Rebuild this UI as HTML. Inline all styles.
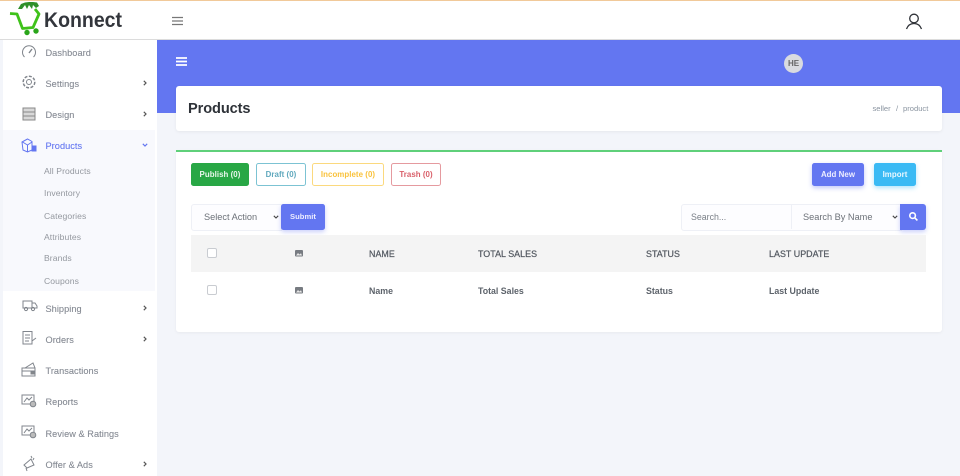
<!DOCTYPE html>
<html><head><meta charset="utf-8"><title>Products</title>
<style>
html,body{margin:0;padding:0}
body{width:960px;height:476px;overflow:hidden;position:relative;background:#f3f5fa;font-family:"Liberation Sans",sans-serif;color:#6c757d}
#w{position:absolute;left:0;top:0;width:960px;height:476px;filter:blur(.3px)}
.a{position:absolute;white-space:nowrap}
.side{font-size:9.2px;color:#858a93;left:45.5px;line-height:12px;letter-spacing:.05px;-webkit-text-stroke:.1px #858a93}
.sub{font-size:8.6px;color:#94989f;left:44px;line-height:12px;letter-spacing:.08px}
.chev{left:143px;width:4px;height:6px}
svg{position:absolute;overflow:visible}
.ic{left:21px;width:16px;height:16px;fill:none;stroke:#80858c;stroke-width:1}
.btn{box-sizing:border-box;height:23px;line-height:21px;text-align:center;font-size:7.9px;font-weight:bold;border:1px solid;border-radius:2.5px;letter-spacing:.05px}
.th{font-size:8.9px;color:#50565e;line-height:12px;letter-spacing:.05px;-webkit-text-stroke:.2px #50565e}
.td{font-size:8.8px;color:#5d636b;font-weight:bold;line-height:12px}
.cb{left:207px;width:10px;height:10px;box-sizing:border-box;border:1px solid #c9ccd1;border-radius:2px;background:#fff}
</style></head><body><div id="w">
<div class="a" style="left:0;top:0;width:960px;height:1px;background:#f1c999"></div>
<div class="a" style="left:0;top:1px;width:960px;height:38px;background:#fff"></div>
<div class="a" style="left:0;top:39px;width:960px;height:1px;background:#dcdcdc"></div>

<svg style="left:0;top:0;width:130px;height:40px">
<path d="M10 13.5 L17 14 L22.5 28.5 L33 27.5 L39 14 L35 9" fill="none" stroke="#3fc21a" stroke-width="2.8" stroke-linejoin="round"/>
<path d="M18 9 L21 4 L25 2.5 L29 2 L33 2 L37 2.5 L39 6 L36 8 L33 5 L32 9 L29 5 L27 9 L25 5 L22 9Z" fill="#2f8f2a"/>
<circle cx="27" cy="32.5" r="2.7" fill="#2aa51a"/><circle cx="36" cy="31" r="2.7" fill="#2aa51a"/>
<text x="44" y="27" font-family="Liberation Sans" font-size="21" font-weight="bold" fill="#33363c" textLength="78" lengthAdjust="spacingAndGlyphs">Konnect</text>
</svg>
<svg style="left:172px;top:17px;width:11px;height:8px"><path d="M0 .5H11M0 4H11M0 7.5H11" stroke="#777" stroke-width="1.2"/></svg>
<svg style="left:905px;top:12px;width:18px;height:18px" fill="none" stroke="#2f3238" stroke-width="1.3"><circle cx="9" cy="6.5" r="4.3"/><path d="M1.5 17C3 13 6 11.5 9 11.5S15 13 16.5 17"/></svg>

<!-- sidebar -->
<div class="a" style="left:3px;top:40px;width:154px;height:436px;background:#fff"></div>
<div class="a" style="left:3px;top:130px;width:152px;height:161px;background:#f8f9fd"></div>

<svg class="ic" style="top:44px" viewBox="0 0 16 16"><path d="M3.5 13A6.5 6.5 0 1 1 12.5 13"/><path d="M8 9L11 5" stroke-width="1.4"/></svg>
<div class="a side" style="top:46.5px">Dashboard</div>
<svg class="ic" style="top:74px" viewBox="0 0 16 16"><circle cx="8" cy="8" r="2.5"/><circle cx="8" cy="8" r="5.8" stroke-dasharray="3 1.5" stroke-width="1.5"/></svg>
<div class="a side" style="top:77.5px">Settings</div>
<svg class="a chev" style="top:80px" viewBox="0 0 4 6"><path d="M.8 .8L3 3L.8 5.2" fill="none" stroke="#555" stroke-width="1.2"/></svg>
<svg class="ic" style="top:106px" viewBox="0 0 16 16"><path d="M2 2H14V14H2ZM2 6H14M2 10H14" fill="#d8d8d8" stroke="#888"/></svg>
<div class="a side" style="top:109px">Design</div>
<svg class="a chev" style="top:111px" viewBox="0 0 4 6"><path d="M.8 .8L3 3L.8 5.2" fill="none" stroke="#555" stroke-width="1.2"/></svg>
<svg class="ic" style="top:137px;stroke:#6376f1" viewBox="0 0 16 16"><path d="M1 5L6.5 2L11 4.5V13L6.5 15L2 13ZM1.5 5L6.5 8V15M6.5 8L11 5"/><path d="M11 9H15V14H11Z" fill="#6376f1"/></svg>
<div class="a side" style="top:140px;color:#6376f1;-webkit-text-stroke:.1px #6376f1">Products</div>
<svg class="a" style="left:142px;top:143px;width:6px;height:4px" viewBox="0 0 6 4"><path d="M.8 .8L3 3L5.2 .8" fill="none" stroke="#6376f1" stroke-width="1.2"/></svg>
<div class="a sub" style="top:165px">All Products</div>
<div class="a sub" style="top:187px">Inventory</div>
<div class="a sub" style="top:210px">Categories</div>
<div class="a sub" style="top:231px">Attributes</div>
<div class="a sub" style="top:252px">Brands</div>
<div class="a sub" style="top:275px">Coupons</div>
<svg class="ic" style="top:298px" viewBox="0 0 16 16"><path d="M2 3H11V10H2ZM11 5H14L16 8V10H11"/><circle cx="5" cy="11" r="1.6"/><circle cx="12" cy="11" r="1.6"/></svg>
<div class="a side" style="top:302.5px">Shipping</div>
<svg class="a chev" style="top:305px" viewBox="0 0 4 6"><path d="M.8 .8L3 3L.8 5.2" fill="none" stroke="#555" stroke-width="1.2"/></svg>
<svg class="ic" style="top:330px" viewBox="0 0 16 16"><path d="M2 1.5H11V14H2ZM4 5H9M4 8H9M4 11H8M11 11L15 8"/></svg>
<div class="a side" style="top:334px">Orders</div>
<svg class="a chev" style="top:336px" viewBox="0 0 4 6"><path d="M.8 .8L3 3L.8 5.2" fill="none" stroke="#555" stroke-width="1.2"/></svg>
<svg class="ic" style="top:361px" viewBox="0 0 16 16"><path d="M1 7H14V15H1ZM1 10H14M4 7L12 2L14 7"/><path d="M10 11H13V13H10Z" fill="#888"/></svg>
<div class="a side" style="top:365px">Transactions</div>
<svg class="ic" style="top:392px" viewBox="0 0 16 16"><path d="M1 3H13V12H1ZM3 10L6 6L8 8L11 5"/><circle cx="12" cy="12" r="2.8" fill="#bbb"/></svg>
<div class="a side" style="top:396px">Reports</div>
<svg class="ic" style="top:423px" viewBox="0 0 16 16"><path d="M1 3H13V12H1ZM3 10L6 6L8 8L11 5"/><circle cx="12" cy="12" r="2.8" fill="#bbb"/></svg>
<div class="a side" style="top:427.5px">Review &amp; Ratings</div>
<svg class="ic" style="top:455px" viewBox="0 0 16 16"><path d="M3 10L10 4L13 10L6 13ZM5 13L6 16M10 1L11 3M13 3L12 5"/></svg>
<div class="a side" style="top:458.5px">Offer &amp; Ads</div>
<svg class="a chev" style="top:461px" viewBox="0 0 4 6"><path d="M.8 .8L3 3L.8 5.2" fill="none" stroke="#555" stroke-width="1.2"/></svg>

<!-- purple band -->
<div class="a" style="left:157px;top:40px;width:803px;height:73px;background:#6376f1"></div>
<svg style="left:176px;top:57px;width:11px;height:9px"><path d="M0 1H11M0 4.5H11M0 8H11" stroke="#fff" stroke-width="1.7"/></svg>
<div class="a" style="left:784px;top:54px;width:19px;height:19px;border-radius:50%;background:#d9dbe0;color:#666;font-size:8px;font-weight:bold;line-height:19px;text-align:center">HE</div>

<!-- title card -->
<div class="a" style="left:176px;top:86px;width:766px;height:45px;background:#fff;border-radius:3px;box-shadow:0 1px 3px rgba(0,0,0,.06)"></div>
<div class="a" style="left:188px;top:99px;font-size:14.6px;font-weight:bold;color:#2e3238;line-height:20px;letter-spacing:-.1px;width:70px">Products</div>
<div class="a" style="left:872.5px;top:103px;font-size:7.6px;color:#8a94a0;line-height:11px">seller</div>
<div class="a" style="left:896px;top:103px;font-size:7.6px;color:#8a94a0;line-height:11px">/</div>
<div class="a" style="left:903px;top:103px;font-size:7.6px;color:#8a94a0;line-height:11px">product</div>

<!-- main card -->
<div class="a" style="left:176px;top:150px;width:766px;height:182px;background:#fff;border-radius:3px;box-shadow:0 1px 3px rgba(0,0,0,.05)"></div>
<div class="a" style="left:176px;top:150px;width:766px;height:1.5px;background:#5fd07a"></div>

<div class="a btn" style="left:191px;top:163px;width:58px;background:#28a745;border-color:#28a745;color:#e8f6eb">Publish (0)</div>
<div class="a btn" style="left:256px;top:163px;width:50px;background:#fff;border-color:#7cc3d3;color:#5fa8bd">Draft (0)</div>
<div class="a btn" style="left:312px;top:163px;width:72px;background:#fff;border-color:#fbd97e;color:#f9c23c">Incomplete (0)</div>
<div class="a btn" style="left:391px;top:163px;width:50px;background:#fff;border-color:#e59a9f;color:#d9606a">Trash (0)</div>
<div class="a btn" style="left:812px;top:163px;width:52px;background:#6376f1;border-color:#6376f1;color:#eef;box-shadow:0 2px 5px rgba(99,118,241,.4)">Add New</div>
<div class="a btn" style="left:874px;top:163px;width:42px;background:#3abaf4;border-color:#3abaf4;color:#eaf8ff;box-shadow:0 2px 5px rgba(58,186,244,.4)">Import</div>

<div class="a" style="left:191px;top:204px;width:89px;height:25px;background:#fdfdff;border:1px solid #eef0f6;border-radius:3px 0 0 3px"></div>
<div class="a" style="left:204px;top:211px;font-size:9.2px;color:#6c7178;line-height:12px">Select Action</div>
<svg style="left:273px;top:215px;width:6px;height:4px" viewBox="0 0 6 4"><path d="M.8 .8L3 3L5.2 .8" fill="none" stroke="#444" stroke-width="1.1"/></svg>
<div class="a btn" style="left:281px;top:204px;width:44px;height:26px;line-height:24px;background:#6376f1;border-color:#6376f1;color:#eef;font-size:7.6px;box-shadow:0 2px 5px rgba(99,118,241,.35)">Submit</div>

<div class="a" style="left:681px;top:204px;width:219px;height:25px;background:#fdfdff;border:1px solid #eef0f6;border-radius:3px 0 0 3px"></div>
<div class="a" style="left:791px;top:205px;width:1px;height:24px;background:#eef0f6"></div>
<div class="a" style="left:691px;top:211px;font-size:8.8px;color:#7b8088;line-height:12px">Search...</div>
<div class="a" style="left:803px;top:211px;font-size:9.2px;color:#6c7178;line-height:12px">Search By Name</div>
<svg style="left:892px;top:215px;width:6px;height:4px" viewBox="0 0 6 4"><path d="M.8 .8L3 3L5.2 .8" fill="none" stroke="#444" stroke-width="1.1"/></svg>
<div class="a" style="left:900px;top:204px;width:26px;height:26px;background:#6376f1;border-radius:0 3px 3px 0;box-shadow:0 2px 5px rgba(99,118,241,.35)"></div>
<svg style="left:909px;top:212px;width:9px;height:9px" fill="none" stroke="#fff" stroke-width="1.6"><circle cx="3.6" cy="3.6" r="2.8"/><path d="M5.8 5.8L8.4 8.4"/></svg>

<div class="a" style="left:191px;top:235px;width:735px;height:37px;background:#f4f4f4"></div>
<div class="a cb" style="top:248px"></div>
<div class="a cb" style="top:285px"></div>
<svg style="left:295px;top:250px;width:8px;height:7px"><rect width="8" height="6.5" rx="1" fill="#777b81"/><path d="M1 5.5L3 3L4.5 4.5L6 3.2L7 5.5Z" fill="#e8e8e8"/></svg>
<svg style="left:295px;top:287px;width:8px;height:7px"><rect width="8" height="6.5" rx="1" fill="#777b81"/><path d="M1 5.5L3 3L4.5 4.5L6 3.2L7 5.5Z" fill="#e8e8e8"/></svg>
<div class="a th" style="left:369px;top:247.5px">NAME</div>
<div class="a th" style="left:478px;top:247.5px">TOTAL SALES</div>
<div class="a th" style="left:646px;top:247.5px">STATUS</div>
<div class="a th" style="left:769px;top:247.5px">LAST UPDATE</div>
<div class="a td" style="left:369px;top:285px">Name</div>
<div class="a td" style="left:478px;top:285px">Total Sales</div>
<div class="a td" style="left:646px;top:285px">Status</div>
<div class="a td" style="left:769px;top:285px">Last Update</div>
</div></body></html>
